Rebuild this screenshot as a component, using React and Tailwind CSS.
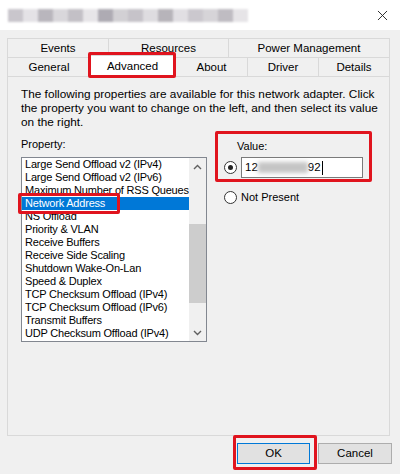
import { X } from "lucide-react";

const props = [
  "Large Send Offload v2 (IPv4)",
  "Large Send Offload v2 (IPv6)",
  "Maximum Number of RSS Queues",
  "Network Address",
  "NS Offload",
  "Priority & VLAN",
  "Receive Buffers",
  "Receive Side Scaling",
  "Shutdown Wake-On-Lan",
  "Speed & Duplex",
  "TCP Checksum Offload (IPv4)",
  "TCP Checksum Offload (IPv6)",
  "Transmit Buffers",
  "UDP Checksum Offload (IPv4)",
];

const topTabs = [
  { label: "Events", w: "w-[101px]" },
  { label: "Resources", w: "w-[120px]" },
  { label: "Power Management", w: "w-[162px]" },
];

const bottomTabs = [
  { label: "General", w: "w-[83px]" },
  { label: "Advanced", w: "w-[85px]", active: true },
  { label: "About", w: "w-[72px]" },
  { label: "Driver", w: "w-[71px]" },
  { label: "Details", w: "w-[72px]" },
];

const blurTitle = ["#c9c6cc", "#e4e2e6", "#b9b6bd", "#d9d7db", "#c3c0c6", "#e7e5e8", "#aeabb3", "#d2d0d4", "#c6c3c9", "#dedce0", "#b7b4ba", "#e1dfe3", "#cbc8ce", "#d6d4d8", "#bfbcc2", "#e6e4e7"];

function Radio({ checked }) {
  return (
    <span className="flex h-[13px] w-[13px] shrink-0 items-center justify-center rounded-full border border-[#333] bg-white">
      {checked ? <span className="h-[5px] w-[5px] rounded-full bg-[#222]" /> : null}
    </span>
  );
}

function Chevron({ up }) {
  return (
    <svg width="9" height="6" viewBox="0 0 9 6">
      <path d={up ? "M1 5 L4.5 1.5 L8 5" : "M1 1 L4.5 4.5 L8 1"} fill="none" stroke="#606060" strokeWidth="1.4" />
    </svg>
  );
}

export default function App() {
  return (
    <div className="relative h-[474px] w-[400px] overflow-hidden bg-[#f0f0f0] font-['Liberation_Sans',Arial,sans-serif] text-[11px] leading-[13px] text-black">
      {/* title bar */}
      <div className="flex h-[30px] items-center justify-between bg-white pl-[8px] pr-[9px]">
        <div className="flex h-[13px] blur-[1.2px]">
          {blurTitle.map((c, i) => (
            <span key={i} className="h-full w-[15px]" style={{ background: c }} />
          ))}
        </div>
        <X size={17} strokeWidth={1.3} className="text-[#222]" />
      </div>

      <div className="pl-[7px] pt-[8px]">
        {/* tabs */}
        <div className="flex h-[19px] text-[11.5px]">
          {topTabs.map((t) => (
            <div key={t.label} className={`${t.w} flex items-center justify-center border border-b-0 border-r-0 border-[#d9d9d9] last:border-r`}>
              {t.label}
            </div>
          ))}
        </div>
        <div className="flex h-[19px] items-end text-[11.5px]">
          {bottomTabs.map((t) =>
            t.active ? (
              <div key={t.label} className={`${t.w} z-10 -mb-px flex h-[22px] items-center justify-center border border-b-0 border-[#d9d9d9] bg-white`}>
                {t.label}
              </div>
            ) : (
              <div key={t.label} className={`${t.w} flex h-[19px] items-center justify-center border border-b-0 border-r-0 border-[#d9d9d9] last:border-r`}>
                {t.label}
              </div>
            )
          )}
        </div>

        {/* page */}
        <div className="flex h-[360px] w-[383px] flex-col border border-[#d9d9d9] pl-[13px] pt-[10px]">
          <p className="w-[366px] text-[11.8px] leading-[14px]">
            The following properties are available for this network adapter. Click the property you want to change on the left, and then select its value on the right.
          </p>
          <div className="mt-[8px] flex">
            <div className="flex shrink-0 flex-col">
              <span className="h-[14px] leading-[14px]">Property:</span>
              <div className="mt-[6px] flex h-[185px] w-[186px] border border-[#828790] bg-white">
                <div className="flex min-w-0 flex-1 flex-col overflow-hidden tracking-[-0.2px]">
                  {props.map((p) => (
                    <div
                      key={p}
                      className={`h-[13px] whitespace-nowrap pl-[3px] ${p === "Network Address" ? "bg-[#0078d7] text-white" : ""}`}
                    >
                      {p}
                    </div>
                  ))}
                </div>
                <div className="flex w-[17px] shrink-0 flex-col items-center bg-[#f0f0f0]">
                  <div className="flex h-[17px] items-center justify-center"><Chevron up /></div>
                  <div className="mt-[49px] h-[79px] w-[17px] bg-[#cdcdcd]" />
                  <div className="flex-1" />
                  <div className="flex h-[17px] items-center justify-center"><Chevron /></div>
                </div>
              </div>
            </div>

            <div className="ml-[17px] flex flex-col pt-[2px]">
              <span className="ml-[13px] h-[14px] leading-[14px]">Value:</span>
              <div className="mt-[4px] flex items-center gap-[4px]">
                <Radio checked />
                <div className="flex h-[21px] w-[122px] items-center border border-[#7a7a7a] bg-white pl-[3px] text-[11.5px]">
                  <span>12</span>
                  <span className="h-[11px] w-[50px] bg-[#c4c4c4] blur-[2px]" />
                  <span>92</span>
                  <span className="ml-[1px] h-[14px] w-px bg-black" />
                </div>
              </div>
              <div className="mt-[13px] flex items-center gap-[4px]">
                <Radio />
                <span>Not Present</span>
              </div>
            </div>
          </div>
        </div>
      </div>

      {/* buttons */}
      <div className="flex justify-end gap-[8px] pr-[8px] pt-[7px]">
        <button className="h-[21px] w-[73px] border border-[#0078d7] bg-[#e1e1e1] text-[11.5px]">OK</button>
        <button className="h-[21px] w-[74px] border border-[#adadad] bg-[#e1e1e1] text-[11.5px]">Cancel</button>
      </div>

      {/* red annotations */}
      <div className="absolute left-[88px] top-[52px] z-20 h-[26px] w-[88px] rounded-[2px] border-[3px] border-[#e0141e]" />
      <div className="absolute left-[18px] top-[193px] z-20 h-[21px] w-[102px] rounded-[2px] border-[3px] border-[#e0141e]" />
      <div className="absolute left-[215px] top-[131px] z-20 h-[51px] w-[157px] rounded-[2px] border-[3px] border-[#e0141e]" />
      <div className="absolute left-[233px] top-[435px] z-20 h-[35px] w-[84px] rounded-[2px] border-[3px] border-[#e0141e]" />
    </div>
  );
}
